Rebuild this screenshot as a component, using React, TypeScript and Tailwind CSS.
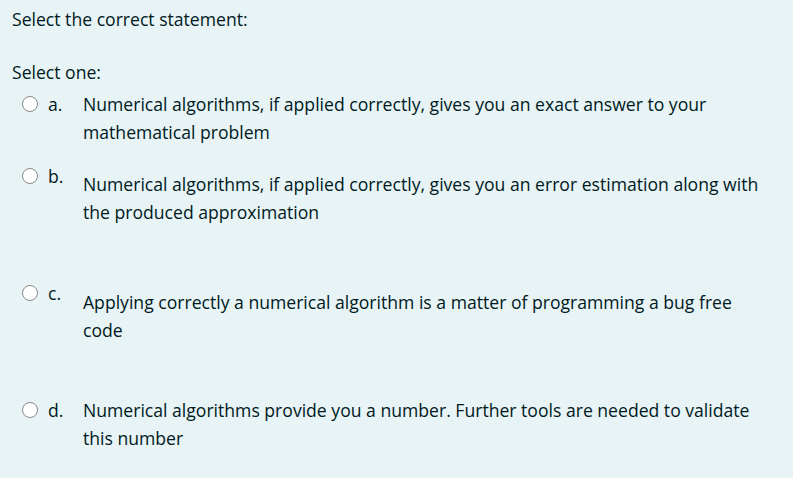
export default function App() {
  const options = [
    {
      key: 'a',
      text: 'Numerical algorithms, if applied correctly, gives you an exact answer to your mathematical problem',
      rowClass: 'mt-1',
      textClass: 'pt-0',
    },
    {
      key: 'b',
      text: 'Numerical algorithms, if applied correctly, gives you an error estimation along with the produced approximation',
      rowClass: 'mt-4',
      textClass: 'pt-2',
    },
    {
      key: 'c',
      text: 'Applying correctly a numerical algorithm is a matter of programming a bug free code',
      rowClass: 'mt-[53px]',
      textClass: 'pt-[9px]',
    },
    {
      key: 'd',
      text: 'Numerical algorithms provide you a number. Further tools are needed to validate this number',
      rowClass: 'mt-[52px]',
      textClass: 'pt-0',
    },
  ];

  return (
    <div
      className="w-[793px] h-[478px] bg-[#e7f3f5] text-[#001a1e] text-[17.6px] leading-[28px] overflow-hidden"
      style={{ fontFamily: '"Open Sans", "Noto Sans", sans-serif' }}
    >
      <div className="pl-3 pt-[5px]">Select the correct statement:</div>
      <div className="pl-3 mt-[25px]">Select one:</div>

      <div className="flex flex-col">
        {options.map((o) => (
          <div key={o.key} className={`flex items-start ${o.rowClass}`}>
            <div className="w-[83px] flex items-center shrink-0 pl-[22px]">
              <span className="w-4 h-4 rounded-full border border-[#8a8a8a] bg-white shrink-0" />
              <span className="ml-[10px]">{o.key}.</span>
            </div>
            <div className={`w-[692px] ${o.textClass}`}>{o.text}</div>
          </div>
        ))}
      </div>
    </div>
  );
}
